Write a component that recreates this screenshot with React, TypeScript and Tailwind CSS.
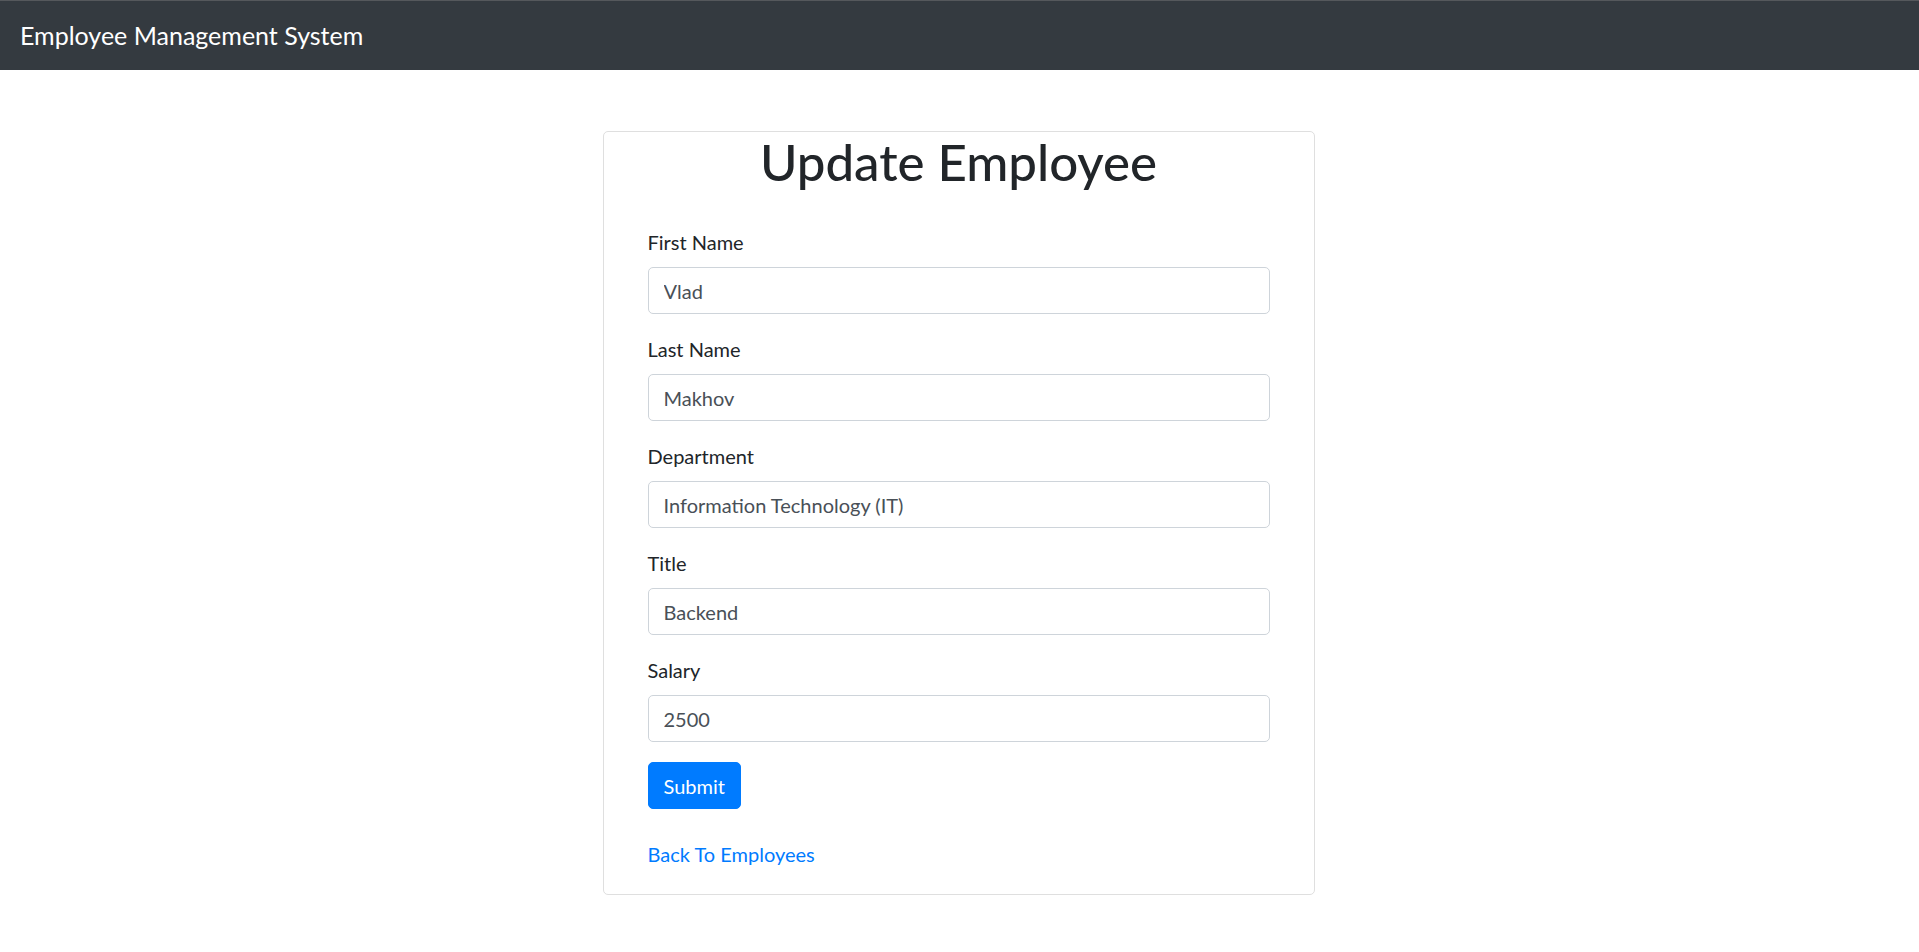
const fields = [
  { label: 'First Name', value: 'Vlad' },
  { label: 'Last Name', value: 'Makhov' },
  { label: 'Department', value: 'Information Technology (IT)' },
  { label: 'Title', value: 'Backend' },
  { label: 'Salary', value: '2500' },
]

function Field({ label, value }: { label: string; value: string }) {
  return (
    <div className="mb-[20px]">
      <label className="block text-[20px] leading-[30px] mb-[10px]">{label}</label>
      <input
        readOnly
        value={value}
        className="block w-full h-[47px] px-[15px] text-[20px] text-[#495057] bg-white border border-[#ced4da] rounded-[5px] outline-none"
        style={{ fontFamily: 'inherit' }}
      />
    </div>
  )
}

export default function App() {
  return (
    <div className="min-h-screen bg-white text-[#212529]" style={{ fontFamily: 'Lato, "Liberation Sans", sans-serif' }}>
      <nav className="h-[70px] bg-[#343a40] border-t border-[#55585c] flex items-center px-[20px]">
        <a href="#" className="text-white text-[25px] leading-[37px]">
          Employee Management System
        </a>
      </nav>

      <div className="flex justify-center pt-[61px]">
        <div className="w-[712px] -translate-x-px border border-[#dfdfdf] rounded-[5px] px-[19px]">
          <h1 className="text-center text-[51px] leading-[60px] mb-[10px] font-medium">Update Employee</h1>
          <div className="p-[25px]">
            <form>
              {fields.map((f) => (
                <Field key={f.label} label={f.label} value={f.value} />
              ))}
              <button
                type="button"
                className="bg-[#007bff] text-white text-[20px] leading-[30px] px-[15px] py-[7.5px] border border-[#007bff] rounded-[5px]"
              >
                Submit
              </button>
            </form>
            <div className="h-[30px]" />
            <a href="#" className="block text-[#007bff] text-[20px] leading-[30px]">
              Back To Employees
            </a>
          </div>
        </div>
      </div>
    </div>
  )
}
